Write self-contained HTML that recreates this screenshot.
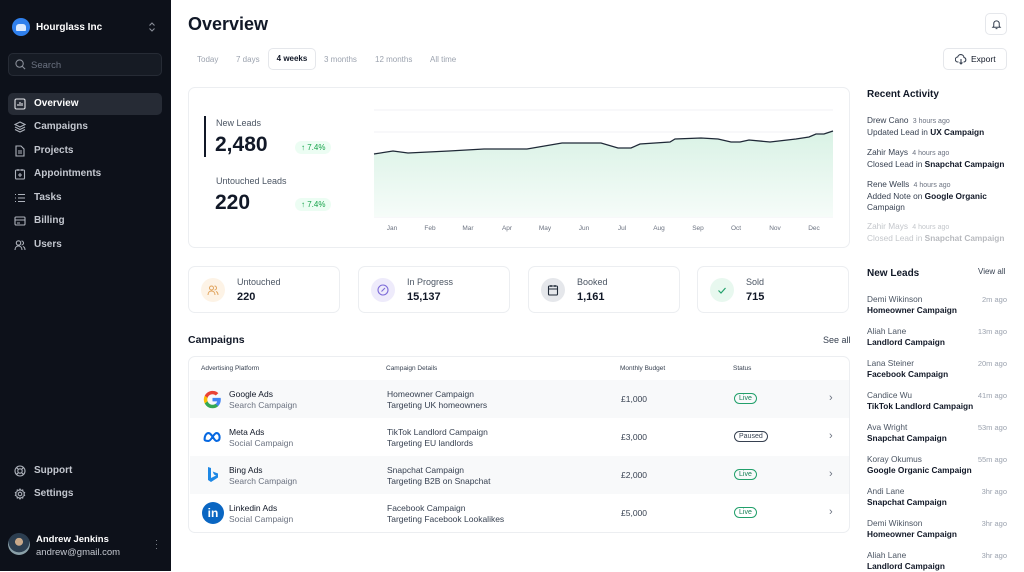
<!DOCTYPE html>
<html><head><meta charset="utf-8"><style>
*{margin:0;padding:0;box-sizing:border-box}
body{width:1024px;height:571px;overflow:hidden;font-family:"Liberation Sans",sans-serif;background:#fff;position:relative;color:#111827}
.a{position:absolute;white-space:nowrap}
.sb{position:absolute;left:0;top:0;width:171px;height:571px;background:#0d111a}
.nav{position:absolute;left:8px;width:154px;height:22px;border-radius:5px;color:#c3c7cf;font-size:10px;font-weight:bold;line-height:22px;padding-left:26px}
.nav svg{position:absolute;left:6px;top:5px}
.card{position:absolute;border:1px solid #eceef1;border-radius:7px;background:#fff}
.g{color:#6b7280}
.badge{position:absolute;background:#ecfdf3;color:#16a34a;font-size:8px;border-radius:8px;padding:2px 6px}
.row{position:absolute;left:1px;width:660px;height:38px;font-size:8.5px;color:#374151}
.row .t{position:absolute;line-height:11px}
.pill{position:absolute;font-size:7px;border:1.3px solid #22a06b;color:#157f55;border-radius:8px;padding:1px 4px}
.ra{position:absolute;left:867px;font-size:8.3px;color:#374151;line-height:11px;white-space:nowrap}
.ra b{color:#111827}
.nl{position:absolute;left:867px;width:140px;font-size:8.3px;line-height:11px;color:#4b5563}
.nl b{display:block;color:#111827}
.nl i{position:absolute;right:0;top:0;font-style:normal;color:#9ca3af;font-size:7.5px}
</style></head><body>
<div class="sb">
 <div class="a" style="left:12px;top:18px;width:18px;height:18px;border-radius:50%;background:#2f80ed"><div style="position:absolute;left:4px;top:6px;width:10px;height:7px;background:#dbeafe;border-radius:3px 3px 1px 1px"></div></div>
 <div class="a" style="left:36px;top:22px;color:#fff;font-size:10px;font-weight:bold">Hourglass Inc</div>
 <svg class="a" style="left:148px;top:21px" width="8" height="12" viewBox="0 0 8 12" fill="none" stroke="#8a8f99" stroke-width="1.1"><path d="M1.5 4.5L4 2l2.5 2.5M1.5 7.5L4 10l2.5-2.5"/></svg>
 <div class="a" style="left:8px;top:53px;width:154px;height:23px;border:1px solid #262b35;background:#161b24;border-radius:5px"></div>
 <svg class="a" style="left:15px;top:59px" width="11" height="11" viewBox="0 0 12 12" fill="none" stroke="#8a8f99" stroke-width="1.2"><circle cx="5" cy="5" r="4"/><path d="M8 8l3 3"/></svg>
 <div class="a" style="left:31px;top:60px;color:#6b7280;font-size:9.5px">Search</div>
 <div class="nav" style="top:93px;background:#262b35;color:#fff"><svg width="12" height="12" viewBox="0 0 12 12" fill="none" stroke="#e5e7eb" stroke-width="1.1"><rect x="1" y="1" width="10" height="10" rx="1.5"/><path d="M4 8V6M6 8V4M8 8V5"/></svg>Overview</div>
 <div class="nav" style="top:116px"><svg width="12" height="12" viewBox="0 0 12 12" fill="none" stroke="#aeb3bc" stroke-width="1.1"><path d="M6 1L11 3.5 6 6 1 3.5z M1 6l5 2.5L11 6M1 8.5L6 11l5-2.5"/></svg>Campaigns</div>
 <div class="nav" style="top:140px"><svg width="12" height="12" viewBox="0 0 12 12" fill="none" stroke="#aeb3bc" stroke-width="1.1"><path d="M2 1h5l3 3v7H2z M4 6h4M4 8h4"/></svg>Projects</div>
 <div class="nav" style="top:163px"><svg width="12" height="12" viewBox="0 0 12 12" fill="none" stroke="#aeb3bc" stroke-width="1.1"><rect x="1.5" y="2" width="9" height="9" rx="1"/><path d="M4 1v2M8 1v2M6 5v4M4 7h4"/></svg>Appointments</div>
 <div class="nav" style="top:187px"><svg width="12" height="12" viewBox="0 0 12 12" fill="none" stroke="#aeb3bc" stroke-width="1.1"><path d="M1 2.5h1M1 6h1M1 9.5h1M4 2.5h7M4 6h7M4 9.5h7"/></svg>Tasks</div>
 <div class="nav" style="top:210px"><svg width="12" height="12" viewBox="0 0 12 12" fill="none" stroke="#aeb3bc" stroke-width="1.1"><rect x="1" y="2" width="10" height="8" rx="1"/><path d="M1 5h10M3 8h3"/></svg>Billing</div>
 <div class="nav" style="top:234px"><svg width="12" height="12" viewBox="0 0 12 12" fill="none" stroke="#aeb3bc" stroke-width="1.1"><circle cx="4.5" cy="4" r="2.2"/><path d="M1 11c0-2.5 1.5-4 3.5-4S8 8.5 8 11M7.5 2a2 2 0 010 4M9 7.5c1.3.5 2 1.7 2 3.5"/></svg>Users</div>
 <div class="nav" style="top:460px"><svg width="12" height="12" viewBox="0 0 12 12" fill="none" stroke="#aeb3bc" stroke-width="1.1"><circle cx="6" cy="6" r="5"/><circle cx="6" cy="6" r="2.2"/><path d="M2.5 2.5l2 2M9.5 2.5l-2 2M2.5 9.5l2-2M9.5 9.5l-2-2"/></svg>Support</div>
 <div class="nav" style="top:483px"><svg width="12" height="12" viewBox="0 0 12 12" fill="none" stroke="#aeb3bc" stroke-width="1.1"><circle cx="6" cy="6" r="1.8"/><path d="M6 1l1 1.5 1.7-.5.3 1.8 1.6.8-.7 1.4.7 1.4-1.6.8-.3 1.8L7 9.5 6 11 5 9.5l-1.7.5L3 8.2l-1.6-.8L2.1 6 1.4 4.6 3 3.8l.3-1.8L5 2.5z"/></svg>Settings</div>
 <div class="a" style="left:8px;top:533px;width:22px;height:22px;border-radius:50%;background:radial-gradient(circle at 50% 40%,#c9a98a 0 22%,#2c3e50 24% 60%,#8aa0a8 62%)"></div>
 <div class="a" style="left:36px;top:534px;color:#fff;font-size:9.5px;font-weight:bold">Andrew Jenkins</div>
 <div class="a" style="left:36px;top:547px;color:#c3c7cf;font-size:9.5px">andrew@gmail.com</div>
 <div class="a" style="left:155px;top:538px;color:#8a8f99;font-size:9px;line-height:4px">·<br>·<br>·</div>
</div>

<div class="a" style="left:188px;top:14px;font-size:18px;font-weight:bold;color:#111827">Overview</div>
<div class="a" style="left:985px;top:13px;width:22px;height:22px;border:1px solid #e5e7eb;border-radius:5px"><svg style="position:absolute;left:5px;top:5px" width="11" height="11" viewBox="0 0 12 12" fill="none" stroke="#374151" stroke-width="1.1"><path d="M3 8V5a3 3 0 016 0v3l1 1H2z M5 10.5h2"/></svg></div>
<div class="a" style="left:197px;top:55px;font-size:8px;color:#9ca3af">Today</div>
<div class="a" style="left:236px;top:55px;font-size:8px;color:#9ca3af">7 days</div>
<div class="a" style="left:268px;top:48px;width:48px;height:22px;border:1px solid #e5e7eb;border-radius:5px;font-size:8px;font-weight:bold;text-align:center;line-height:20px;color:#111827">4 weeks</div>
<div class="a" style="left:324px;top:55px;font-size:8px;color:#9ca3af">3 months</div>
<div class="a" style="left:375px;top:55px;font-size:8px;color:#9ca3af">12 months</div>
<div class="a" style="left:430px;top:55px;font-size:8px;color:#9ca3af">All time</div>
<div class="a" style="left:943px;top:48px;width:64px;height:22px;border:1px solid #e5e7eb;border-radius:5px;font-size:8.5px;line-height:20px;padding-left:27px;color:#111827">Export<svg style="position:absolute;left:11px;top:5px" width="12" height="11" viewBox="0 0 12 11" fill="none" stroke="#374151" stroke-width="1.1"><path d="M3.5 8H3a2.5 2.5 0 01-.3-5A3.2 3.2 0 019 3.5 2.3 2.3 0 019 8h-.5M6 5v5M4.5 8.5L6 10l1.5-1.5"/></svg></div>

<div class="card" style="left:188px;top:87px;width:662px;height:161px"></div>
<div class="a" style="left:204px;top:116px;width:2px;height:41px;background:#111827"></div>
<div class="a" style="left:216px;top:118px;font-size:9px;color:#4b5563">New Leads</div>
<div class="a" style="left:215px;top:133px;font-size:21px;font-weight:bold;color:#111827">2,480</div>
<div class="badge" style="left:295px;top:141px">↑ 7.4%</div>
<div class="a" style="left:216px;top:176px;font-size:9px;color:#4b5563">Untouched Leads</div>
<div class="a" style="left:215px;top:191px;font-size:21px;font-weight:bold;color:#111827">220</div>
<div class="badge" style="left:295px;top:198px">↑ 7.4%</div>
<svg class="a" style="left:0;top:0" width="1024" height="240">
 <defs><linearGradient id="gr" x1="0" y1="0" x2="0" y2="1"><stop offset="0" stop-color="#d9f2e5"/><stop offset="1" stop-color="#f6fcf9"/></linearGradient></defs>
 <g stroke="#f1f2f4" stroke-width="1"><path d="M374 110H833M374 132H833M374 153H833M374 174H833M374 196H833M374 217H833"/></g>
 <path d="M374 154L393 151 408 153 449 151 484 149 527 149 562 143 601 143 618 148 631 148 640 144 670 142 675 139 701 138 718 139 731 142 740 142 749 140 770 142 796 139 809 137 816 134 824 134 833 131V217H374Z" fill="url(#gr)"/>
 <path d="M374 154L393 151 408 153 449 151 484 149 527 149 562 143 601 143 618 148 631 148 640 144 670 142 675 139 701 138 718 139 731 142 740 142 749 140 770 142 796 139 809 137 816 134 824 134 833 131" fill="none" stroke="#1f2937" stroke-width="1.3"/>
 <g font-size="6.5" fill="#6b7280" text-anchor="middle" font-family="Liberation Sans"><text x="392" y="230">Jan</text><text x="430" y="230">Feb</text><text x="468" y="230">Mar</text><text x="507" y="230">Apr</text><text x="545" y="230">May</text><text x="584" y="230">Jun</text><text x="622" y="230">Jul</text><text x="659" y="230">Aug</text><text x="698" y="230">Sep</text><text x="736" y="230">Oct</text><text x="775" y="230">Nov</text><text x="814" y="230">Dec</text></g>
</svg>

<div class="card" style="left:188px;top:266px;width:152px;height:47px"><div class="a" style="left:12px;top:11px;width:24px;height:24px;border-radius:50%;background:#fdf3e6"><svg style="position:absolute;left:6px;top:6px" width="12" height="12" viewBox="0 0 12 12" fill="none" stroke="#e0a35c" stroke-width="1"><circle cx="4.5" cy="4" r="2"/><path d="M1 11c0-2.5 1.5-4 3.5-4S8 8.5 8 11M7.5 2a2 2 0 010 4M9 7.5c1.3.5 2 1.7 2 3.5"/></svg></div><div class="a" style="left:48px;top:10px;font-size:9px;color:#4b5563">Untouched</div><div class="a" style="left:48px;top:24px;font-size:11px;font-weight:bold">220</div></div>
<div class="card" style="left:358px;top:266px;width:152px;height:47px"><div class="a" style="left:12px;top:11px;width:24px;height:24px;border-radius:50%;background:#eeebfb"><svg style="position:absolute;left:6px;top:6px" width="12" height="12" viewBox="0 0 12 12" fill="none" stroke="#7c6ad8" stroke-width="1.1"><circle cx="6" cy="6" r="5"/><path d="M4.5 7.5L8 4"/></svg></div><div class="a" style="left:48px;top:10px;font-size:9px;color:#4b5563">In Progress</div><div class="a" style="left:48px;top:24px;font-size:11px;font-weight:bold">15,137</div></div>
<div class="card" style="left:528px;top:266px;width:152px;height:47px"><div class="a" style="left:12px;top:11px;width:24px;height:24px;border-radius:50%;background:#e5e7eb"><svg style="position:absolute;left:6px;top:6px" width="12" height="12" viewBox="0 0 12 12" fill="none" stroke="#1f2937" stroke-width="1.1"><rect x="1.5" y="2" width="9" height="9" rx="1"/><path d="M4 1v2M8 1v2M1.5 5h9"/></svg></div><div class="a" style="left:48px;top:10px;font-size:9px;color:#4b5563">Booked</div><div class="a" style="left:48px;top:24px;font-size:11px;font-weight:bold">1,161</div></div>
<div class="card" style="left:697px;top:266px;width:152px;height:47px"><div class="a" style="left:12px;top:11px;width:24px;height:24px;border-radius:50%;background:#e8f8ef"><svg style="position:absolute;left:6px;top:6px" width="12" height="12" viewBox="0 0 12 12" fill="none" stroke="#22a06b" stroke-width="1.2"><path d="M2.5 6.5l2.5 2.5 4.5-5"/></svg></div><div class="a" style="left:48px;top:10px;font-size:9px;color:#4b5563">Sold</div><div class="a" style="left:48px;top:24px;font-size:11px;font-weight:bold">715</div></div>

<div class="a" style="left:188px;top:334px;font-size:10.5px;font-weight:bold">Campaigns</div>
<div class="a" style="left:823px;top:335px;font-size:9px;color:#374151">See all</div>
<div class="card" style="left:188px;top:356px;width:662px;height:177px;overflow:hidden">
 <div class="a" style="left:12px;top:8px;font-size:6.5px;color:#374151">Advertising Platform</div>
 <div class="a" style="left:197px;top:8px;font-size:6.5px;color:#374151">Campaign Details</div>
 <div class="a" style="left:431px;top:8px;font-size:6.5px;color:#374151">Monthly Budget</div>
 <div class="a" style="left:544px;top:8px;font-size:6.5px;color:#374151">Status</div>
 <div class="row" style="top:23px;background:#f8f9fa">
  <svg class="a" style="left:13px;top:10px" width="19" height="19" viewBox="0 0 24 24"><path d="M22.5 12.2c0-.8-.1-1.5-.2-2.2H12v4.3h5.9a5 5 0 01-2.2 3.3v2.7h3.5c2.1-1.9 3.3-4.8 3.3-8.1z" fill="#4285F4"/><path d="M12 23c3 0 5.5-1 7.2-2.7l-3.5-2.7c-1 .7-2.2 1.1-3.7 1.1-2.9 0-5.3-1.9-6.2-4.5H2.2v2.8A11 11 0 0012 23z" fill="#34A853"/><path d="M5.8 14.2a6.6 6.6 0 010-4.3V7.1H2.2a11 11 0 000 9.9z" fill="#FBBC05"/><path d="M12 5.4c1.6 0 3.1.6 4.2 1.6l3.2-3.1A11 11 0 002.2 7.1l3.6 2.8C6.7 7.3 9.1 5.4 12 5.4z" fill="#EA4335"/></svg>
  <div class="t" style="left:39px;top:9px;color:#111827">Google Ads<br><span class="g">Search Campaign</span></div>
  <div class="t" style="left:197px;top:9px">Homeowner Campaign<br>Targeting UK homeowners</div>
  <div class="t" style="left:431px;top:14px">£1,000</div>
  <div class="pill" style="left:544px;top:13px">Live</div>
  <div class="t" style="left:639px;top:13px;font-size:11px;color:#6b7280">›</div>
 </div>
 <div class="row" style="top:61px">
  <svg class="a" style="left:13px;top:12px" width="19" height="14" viewBox="0 0 24 14" fill="none" stroke="#0668E1" stroke-width="2.6"><path d="M2 10c0-5 2.5-8 5-8 4 0 7 10 10 10 2.5 0 4-1.5 4-4.5S19.5 2 17 2c-3.5 0-6.5 10-10 10-2.5 0-5-.5-5-2z"/></svg>
  <div class="t" style="left:39px;top:9px;color:#111827">Meta Ads<br><span class="g">Social Campaign</span></div>
  <div class="t" style="left:197px;top:9px">TikTok Landlord Campaign<br>Targeting EU landlords</div>
  <div class="t" style="left:431px;top:14px">£3,000</div>
  <div class="pill" style="left:544px;top:13px;border-color:#374151;color:#374151">Paused</div>
  <div class="t" style="left:639px;top:13px;font-size:11px;color:#6b7280">›</div>
 </div>
 <div class="row" style="top:99px;background:#f8f9fa">
  <svg class="a" style="left:16px;top:10px" width="14" height="18" viewBox="0 0 14 18"><path d="M2 1l3 1v10l5-2.5-2-1-1.3-3L12 7.5v4L5 16 2 14z" fill="#1e88e5"/></svg>
  <div class="t" style="left:39px;top:9px;color:#111827">Bing Ads<br><span class="g">Search Campaign</span></div>
  <div class="t" style="left:197px;top:9px">Snapchat Campaign<br>Targeting B2B on Snapchat</div>
  <div class="t" style="left:431px;top:14px">£2,000</div>
  <div class="pill" style="left:544px;top:13px">Live</div>
  <div class="t" style="left:639px;top:13px;font-size:11px;color:#6b7280">›</div>
 </div>
 <div class="row" style="top:137px">
  <div class="a" style="left:12px;top:8px;width:22px;height:22px;border-radius:50%;background:#0a66c2;color:#fff;font-weight:bold;font-size:12px;text-align:center;line-height:22px">in</div>
  <div class="t" style="left:39px;top:9px;color:#111827">Linkedin Ads<br><span class="g">Social Campaign</span></div>
  <div class="t" style="left:197px;top:9px">Facebook Campaign<br>Targeting Facebook Lookalikes</div>
  <div class="t" style="left:431px;top:14px">£5,000</div>
  <div class="pill" style="left:544px;top:13px">Live</div>
  <div class="t" style="left:639px;top:13px;font-size:11px;color:#6b7280">›</div>
 </div>
</div>

<div class="a" style="left:867px;top:89px;font-size:10px;font-weight:bold">Recent Activity</div>
<div class="ra" style="top:115px">Drew Cano <span style="font-size:7px;color:#6b7280">&nbsp;3 hours ago</span><br>Updated Lead in <b>UX Campaign</b></div>
<div class="ra" style="top:147px">Zahir Mays <span style="font-size:7px;color:#6b7280">&nbsp;4 hours ago</span><br>Closed Lead in <b>Snapchat Campaign</b></div>
<div class="ra" style="top:179px">Rene Wells <span style="font-size:7px;color:#6b7280">&nbsp;4 hours ago</span><br>Added Note on <b>Google Organic</b><br>Campaign</div>
<div class="ra" style="top:221px;opacity:.3">Zahir Mays <span style="font-size:7px">&nbsp;4 hours ago</span><br>Closed Lead in <b>Snapchat Campaign</b></div>
<div class="a" style="left:867px;top:268px;font-size:10px;font-weight:bold">New Leads</div>
<div class="a" style="left:978px;top:267px;font-size:8px;color:#374151">View all</div>
<div class="nl" style="top:294px">Demi Wikinson<i>2m ago</i><b>Homeowner Campaign</b></div>
<div class="nl" style="top:326px">Aliah Lane<i>13m ago</i><b>Landlord Campaign</b></div>
<div class="nl" style="top:358px">Lana Steiner<i>20m ago</i><b>Facebook Campaign</b></div>
<div class="nl" style="top:390px">Candice Wu<i>41m ago</i><b>TikTok Landlord Campaign</b></div>
<div class="nl" style="top:422px">Ava Wright<i>53m ago</i><b>Snapchat Campaign</b></div>
<div class="nl" style="top:454px">Koray Okumus<i>55m ago</i><b>Google Organic Campaign</b></div>
<div class="nl" style="top:486px">Andi Lane<i>3hr ago</i><b>Snapchat Campaign</b></div>
<div class="nl" style="top:518px">Demi Wikinson<i>3hr ago</i><b>Homeowner Campaign</b></div>
<div class="nl" style="top:550px">Aliah Lane<i>3hr ago</i><b>Landlord Campaign</b></div>
</body></html>
